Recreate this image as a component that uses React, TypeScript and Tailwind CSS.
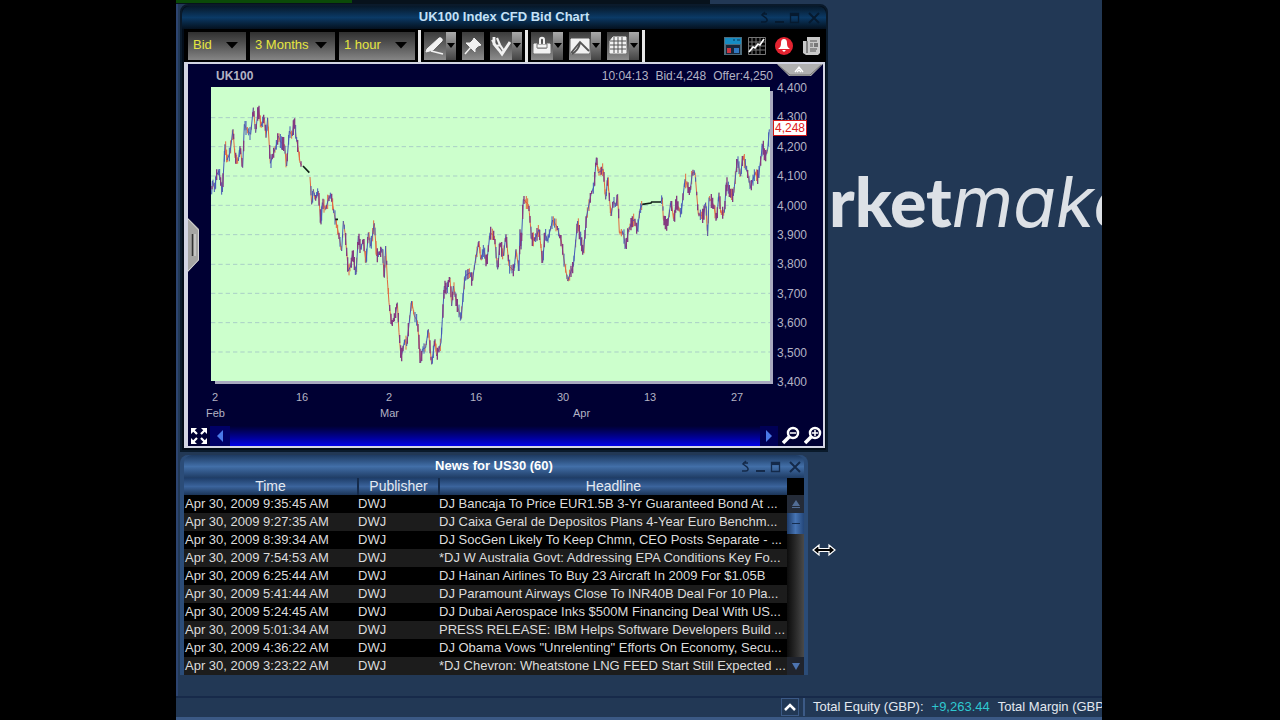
import React from "react";

type Point = [number, number];

const FEBRUARY: Point[] = [
  [2, 322], [4, 282], [12, 307], [15, 267], [24, 252], [34, 315], [42, 172], [48, 219], [57, 197], [66, 127], [72, 212], [82, 222], [87, 177], [95, 242],
  [100, 112], [107, 127], [119, 142], [127, 62], [134, 137], [142, 62], [150, 117], [160, 92], [165, 152], [170, 92], [178, 229], [186, 202], [194, 182],
  [202, 147], [210, 167], [220, 172], [227, 237], [235, 132], [244, 147], [249, 97], [255, 147], [262, 187], [267, 227], [272, 235],
];
const LATE_FEBRUARY: Point[] = [
  [297, 270], [302, 352], [307, 307], [312, 337], [322, 312], [330, 412], [334, 347], [344, 367], [352, 337], [360, 322], [370, 382], [382, 437], [392, 492],
  [397, 402], [402, 437], [412, 552], [419, 537], [425, 497], [435, 562], [442, 447], [449, 487], [457, 457], [465, 527], [472, 437], [479, 477], [490, 409],
  [497, 507], [507, 497], [514, 487], [520, 572], [524, 477], [529, 577], [534, 647], [542, 712], [552, 687], [559, 647], [564, 737], [570, 812],
];
const MARCH: Point[] = [
  [570, 812], [582, 757], [587, 777], [594, 712], [602, 642], [610, 687], [619, 702], [629, 827], [634, 787], [644, 782], [652, 727], [662, 832], [672, 757],
  [677, 807], [690, 767], [694, 697], [700, 597], [707, 607], [717, 572], [722, 657], [727, 597], [737, 647], [750, 697], [762, 567], [777, 557], [784, 582],
  [792, 527], [804, 462], [809, 517], [819, 487], [827, 532], [837, 437], [850, 447], [860, 547], [867, 467], [877, 507], [885, 442], [894, 537], [909, 552],
  [915, 487], [924, 552], [927, 427], [930, 487], [937, 337], [952, 352], [955, 377], [962, 457], [972, 457], [984, 427], [995, 527], [1002, 437], [1009, 462],
  [1017, 432], [1025, 399], [1037, 417], [1052, 467], [1057, 507], [1070, 582], [1082, 547], [1087, 537], [1100, 402],
];
const APRIL: Point[] = [
  [1100, 402], [1107, 447], [1117, 497], [1127, 387], [1140, 322], [1149, 297], [1156, 212], [1162, 257], [1177, 247], [1184, 337], [1190, 272], [1200, 387],
  [1207, 342], [1215, 357], [1220, 322], [1225, 437], [1237, 437], [1244, 482], [1252, 432], [1262, 407], [1270, 397], [1279, 432], [1287, 367], [1294, 352],
];
const LATE_APRIL: Point[] = [
  [1350, 344], [1354, 332], [1357, 397], [1369, 417], [1380, 342], [1389, 402], [1395, 342], [1410, 382], [1422, 277], [1437, 317], [1444, 257], [1452, 257],
  [1462, 382], [1477, 387], [1484, 347], [1490, 447], [1494, 332], [1507, 352], [1517, 397], [1524, 317], [1529, 377], [1540, 377], [1546, 287], [1557, 317],
  [1567, 327], [1579, 217], [1589, 267], [1595, 207], [1605, 237], [1619, 302], [1632, 257], [1642, 272], [1655, 172], [1662, 212], [1670, 187], [1675, 127],
];

function buildSeries(runs: Point[][]) {
  let up = "";
  let down = "";
  let ticks = "";
  let seed = 7;
  const random = () => {
    seed = (seed * 16807) % 2147483647;
    return seed / 2147483647;
  };
  for (const run of runs) {
    for (let i = 1; i < run.length; i++) {
      const [x0, y0] = run[i - 1];
      const [x1, y1] = run[i];
      const line = `M${x0} ${y0}L${x1} ${y1}`;
      if (y1 < y0) up += line;
      else down += line;
      const steps = Math.max(1, Math.round((x1 - x0) / 4));
      for (let s = 0; s < steps; s++) {
        const t = (s + 0.5) / steps;
        const x = Math.round(x0 + (x1 - x0) * t);
        const y = y0 + (y1 - y0) * t;
        const size = 5 + random() * 17;
        const bar = `M${x} ${Math.round(y - size)}V${Math.round(y + size)}`;
        if (random() > 0.6) ticks += bar;
        else if (random() > 0.5) up += bar;
        else down += bar;
      }
    }
  }
  return { up, down, ticks };
}

const SERIES = buildSeries([FEBRUARY, LATE_FEBRUARY, MARCH, APRIL, LATE_APRIL]);
const GRID = [92, 179, 267, 355, 443, 532, 619, 707, 795];
const PRICES = ["4,400", "4,300", "4,200", "4,100", "4,000", "3,900", "3,800", "3,700", "3,600", "3,500", "3,400"];
const DAYS = ["2", "16", "2", "16", "30", "13", "27"];

const NEWS = [
  ["9:35:45", "DJ Bancaja To Price EUR1.5B 3-Yr Guaranteed Bond At ..."],
  ["9:27:35", "DJ Caixa Geral de Depositos Plans 4-Year Euro Benchm..."],
  ["8:39:34", "DJ SocGen Likely To Keep Chmn, CEO Posts Separate - ..."],
  ["7:54:53", "*DJ W Australia Govt: Addressing EPA Conditions Key Fo..."],
  ["6:25:44", "DJ Hainan Airlines To Buy 23 Aircraft In 2009 For $1.05B"],
  ["5:41:44", "DJ Paramount Airways Close To INR40B Deal For 10 Pla..."],
  ["5:24:45", "DJ Dubai Aerospace Inks $500M Financing Deal With US..."],
  ["5:01:34", "PRESS RELEASE: IBM Helps Software Developers Build ..."],
  ["4:36:22", "DJ Obama Vows \"Unrelenting\" Efforts On Economy, Secu..."],
  ["3:23:22", "*DJ Chevron: Wheatstone LNG FEED Start Still Expected ..."],
];

function WindowControls({ className }: { className: string }) {
  return (
    <div className={`absolute top-0 flex h-full items-center ${className}`}>
      <button aria-label="Restore position">
        <svg width="15" height="14" viewBox="0 0 15 14" fill="none" stroke="currentColor" strokeWidth="1.5"><path d="M5 3h5M8 1L5 4l4 3c2 2 1 4-1 4H4" /></svg>
      </button>
      <button aria-label="Minimise">
        <svg width="15" height="14" viewBox="0 0 15 14" stroke="currentColor" strokeWidth="2"><path d="M3 11h9" /></svg>
      </button>
      <button aria-label="Maximise">
        <svg width="15" height="14" viewBox="0 0 15 14" fill="none" stroke="currentColor" strokeWidth="1.3"><path d="M3.500 2.500h8v9h-8z" /><path d="M3 3.500h9" strokeWidth="3" /></svg>
      </button>
      <button aria-label="Close" className="ml-1">
        <svg width="16" height="14" viewBox="0 0 16 14" stroke="currentColor" strokeWidth="2"><path d="M3 2l10 10M13 2L3 12" /></svg>
      </button>
    </div>
  );
}

function Picker({ label, value, className }: { label: string; value: string; className: string }) {
  return (
    <div className={`relative h-7 bg-linear-to-b from-[#303030] to-[#858585] ${className}`}>
      <select aria-label={label} className="h-full w-full appearance-none bg-transparent pb-1 pl-[5px] text-[13px] text-[#e6e640] outline-none">
        <option>{value}</option>
      </select>
      <svg className="pointer-events-none absolute top-2.5 right-2" width="12" height="7" viewBox="0 0 12 7"><path d="M0 0h12L6 6.500z" fill="#000" /></svg>
    </div>
  );
}

function Tool({ label, menu = true, children }: { label: string; menu?: boolean; children: React.ReactNode }) {
  return (
    <button aria-label={label} className="flex h-7 items-stretch">
      <span className="flex w-[22px] items-center justify-center bg-linear-to-b from-[#3c3c3c] to-[#8c8c8c]">
        <svg width="20" height="22" viewBox="0 0 20 22" fill="none" stroke="#f2f2f2">{children}</svg>
      </span>
      {menu && (
        <span className="flex w-2.5 items-center justify-center bg-linear-to-b from-[#aaa] via-[#777] to-[#444]">
          <svg width="8" height="5" viewBox="0 0 8 5"><path d="M0 0h8L4 5z" fill="#000" /></svg>
        </span>
      )}
    </button>
  );
}

function Divider() {
  return <span className="h-[32px] w-[3px] bg-[#e8e8e8]" />;
}

function ChartWindow() {
  return (
    <section className="flex w-[648px] shrink-0 flex-col rounded-t-lg border-2 border-[#0a1a2b] bg-[#030d19] pb-[2px]">
      <header className="relative flex h-[23px] items-center justify-center rounded-t-lg bg-linear-to-b from-[#061829] via-[#0b3a66] to-[#04111f] pb-[2px]">
        <h2 className="text-[13px] font-bold text-[#c5e2f7]">UK100 Index CFD Bid Chart</h2>
        <WindowControls className="right-1 text-[#061a2f]" />
      </header>
      <div className="ml-[2px] flex h-[33px] items-center bg-black pr-1 pl-1">
        <div className="flex items-center gap-1">
          <Picker label="Price" value="Bid" className="w-[58px]" />
          <Picker label="Period" value="3 Months" className="w-[85px]" />
          <Picker label="Interval" value="1 hour" className="w-[76px]" />
        </div>
        <div className="ml-[3px] flex items-center gap-[3px]">
          <Divider />
          <div className="flex items-center gap-1.5">
            <Tool label="Draw">
              <path d="M2 14L14 3c2-1 4 1 3 3L8 15l-7 2z" fill="#f2f2f2" /><path d="M6 16l12 3" strokeWidth="1.500" />
            </Tool>
            <Tool label="Pin" menu={false}>
              <path d="M11 3l7 7-3 1-3 3v3l-9-9h4l3-3z" fill="#f2f2f2" /><path d="M8 12l-6 7" strokeWidth="1.500" />
            </Tool>
            <Tool label="Settings">
              <path d="M3 2v7l5 6 3 4 8-12" strokeWidth="2.800" /><path d="M1 5l4 6 5-1M6 3l3 7 4 6" strokeWidth="2.200" />
            </Tool>
          </div>
          <Divider />
          <div className="flex items-center gap-1.5">
            <Tool label="Studies">
              <path d="M2 9h3v5h10V9h3v9H2z" fill="#f2f2f2" /><path d="M5 9h10v4H5z" fill="#f2f2f2" stroke="#777" /><path d="M8 9V5c0-3 4-3 4 0v4" strokeWidth="2" />
            </Tool>
            <Tool label="Chart type">
              <path d="M1 4h18v14H1z" fill="#f2f2f2" /><path d="M1 18l9-11 9 9M2 19c5-3 7-6 8-11" stroke="#555" strokeWidth="1.800" />
            </Tool>
            <Tool label="Table">
              <path d="M5 2h13v16H2V6z" fill="#f2f2f2" /><path d="M2 6h16M2 10h16M2 14h16M6 2v16M10 2v16M14 2v16" stroke="#555" />
            </Tool>
          </div>
          <Divider />
        </div>
        <div className="ml-auto flex items-center gap-1.5">
          <button aria-label="Deal ticket">
            <svg width="18" height="18" viewBox="0 0 18 18"><path d="M0 0h18v18H0z" fill="#4f6b7b" /><path d="M1 1h16v6H1z" fill="#168bc2" /><path d="M2 8h14v9H2z" fill="#16263a" /><path d="M3 11h4v5H3z" fill="#c93640" /><path d="M10 11h5v5h-5z" fill="#3177c0" /><path d="M9 3h2M13 3h3" stroke="#11334f" /></svg>
          </button>
          <button aria-label="Chart">
            <svg width="18" height="18" viewBox="0 0 18 18" fill="none"><path d="M.5.5h17v17H.5zM4 1v16M8 1v16M12 1v16M1 5h16M1 9h16M1 13h16" stroke="#777" /><path d="M1 15l4-5 2 1 3-4 2 1 4-6" stroke="#fff" strokeWidth="1.700" /></svg>
          </button>
          <button aria-label="Alerts" className="ml-[2px]">
            <svg width="20" height="20" viewBox="0 0 20 20"><circle cx="10" cy="10" r="9" fill="#e32330" /><path d="M10 3c2 0 3 1.500 3 4 0 3 .5 4 3 6H4c2.500-2 3-3 3-6 0-2.500 1-4 3-4zM8 14h4l-2 2z" fill="#fff" /></svg>
          </button>
          <button aria-label="News" className="ml-[2px]">
            <svg width="20" height="20" viewBox="0 0 20 20"><path d="M5 1h13v16l-2 2H4l-3-2V5h4z" fill="#c9c9c9" /><path d="M5 5v12M8 5h7M8 8h3M8 10h3M8 13h7M8 15h6" stroke="#555" strokeWidth="1.200" /><path d="M12 7h4v4h-4z" fill="#777" /></svg>
          </button>
        </div>
      </div>
      <div className="relative mr-px ml-[2px] flex flex-col border-2 border-l-4 border-[#d3d5e3] bg-[#000033] text-xs text-[#b3b3c4]">
        <div className="flex h-[23px] items-center pr-[50px] pl-7">
          <span className="font-bold">UK100</span>
          <span className="ml-auto flex gap-[7px] whitespace-pre"><span>10:04:13</span><span>Bid:4,248</span><span>Offer:4,250</span></span>
        </div>
        <svg className="absolute top-0 right-0" width="46" height="13" viewBox="0 0 46 13"><path d="M0 0h46L34 12H12z" fill="#b0b0b0" /><path d="M1 1l12 10h20L44 1" fill="none" stroke="#707070" /><path d="M18 8l4-5 4 5M20 8l2-2 2 2" fill="none" stroke="#fff" strokeWidth="1.300" /></svg>
        <svg className="absolute top-[154px] left-0" width="12" height="54" viewBox="0 0 12 54"><path d="M0 0l11 11v31L0 54z" fill="#a6a6a4" /><path d="M0 1l10.500 11v30L0 53" fill="none" stroke="#d6d6d6" /><path d="M4.500 16v22" stroke="#333" strokeWidth="1.500" /><path d="M7 16v22" stroke="#e4e4e4" /></svg>
        <div className="flex">
          <div className="ml-[23px] min-w-0 flex-1">
            <div className="relative mr-1">
              <span className="absolute top-1 -right-[3px] -bottom-[3px] left-1 bg-[#a9aac0]" />
              <svg className="relative block h-[294px] w-full bg-[#ccffcc]" viewBox="0 0 1677 882" preserveAspectRatio="none" fill="none">
                {GRID.map((y) => <path key={y} d={`M0 ${y}H1677`} stroke="#a9cfc6" strokeWidth="3" strokeDasharray="13 9" />)}
                <g strokeWidth="3">
                  <path d={SERIES.down} stroke="#e2683f" />
                  <path d={SERIES.up} stroke="#4458b8" />
                  <path d={SERIES.ticks} stroke="#843a80" strokeWidth="4" />
                </g>
                <path d="M276 237L295 257M373 397H381M1294 352L1320 348L1322 345H1350" stroke="#102018" strokeWidth="5" />
              </svg>
            </div>
          </div>
          <div className="relative -mt-[7px] -mb-[9px] flex w-[49px] flex-col justify-between pl-[3px]">
            {PRICES.map((p) => <span key={p} className="leading-4">{p}</span>)}
            <span className="absolute top-10 -left-px w-[34px] border border-[#d01818] bg-white text-center leading-[14px] text-[#e02020]">4,248</span>
          </div>
        </div>
        <div className="mt-2 mr-[66px] ml-[23px] grid grid-cols-[repeat(7,87px)] text-[11px] leading-4">
          {DAYS.map((d, i) => <span key={i} className="flex w-2 justify-center">{d}</span>)}
        </div>
        <div className="flex h-[17px] pl-[18px] text-[11px] leading-[17px]">
          <span className="w-[174px]">Feb</span><span className="w-[193px]">Mar</span><span>Apr</span>
        </div>
        <div className="mt-1 flex h-5 items-center pr-px pl-[2px]">
          <button aria-label="Full screen" className="mr-0.5">
            <svg width="18" height="18" viewBox="0 0 18 18" fill="#fff" stroke="#fff" strokeWidth="2.200"><path d="M2 2l5 5M16 2l-5 5M2 16l5-5M16 16l-5-5" /><path d="M1 1h6L1 7zM11 1h6v6zM1 11v6h6zM17 11v6h-6z" stroke="none" /></svg>
          </button>
          <button aria-label="Scroll left" className="flex h-full w-5 items-center justify-center bg-[#000066]"><svg width="8" height="12" viewBox="0 0 8 12"><path d="M7 0v12L1 6z" fill="#4a78e8" /></svg></button>
          <div className="h-full flex-1 bg-linear-to-b from-[#000033] to-[#0000e8]" />
          <button aria-label="Scroll right" className="flex h-full w-[18px] items-center justify-center bg-[#000055]"><svg width="8" height="12" viewBox="0 0 8 12"><path d="M1 0v12l6-6z" fill="#4a78e8" /></svg></button>
          {["Zoom out", "Zoom in"].map((name, i) => (
            <button key={name} aria-label={name} className="ml-1">
              <svg width="18" height="20" viewBox="0 0 18 20" fill="none" stroke="#fff"><circle cx="11" cy="7" r="5" strokeWidth="2.500" /><path d="M7 11l-6 6" strokeWidth="3.500" /><path d={i ? "M8 7h6M11 4v6" : "M8 7h6"} strokeWidth="1.500" /></svg>
            </button>
          ))}
        </div>
      </div>
    </section>
  );
}

function NewsWindow() {
  return (
    <section className="relative mt-[3px] flex w-[628px] flex-col rounded-t-lg border-x-4 border-[#2b4c78] bg-[#2b4c78]">
      <header className="relative flex h-[23px] items-center justify-center rounded-t-lg bg-linear-to-b from-[#1d3a61] via-[#426fa8] to-[#1f3c64] pb-[2px]">
        <h2 className="text-[13px] font-bold text-white">News for US30 (60)</h2>
        <WindowControls className="right-px text-[#142a4a]" />
      </header>
      <div className="flex bg-black">
        <table className="min-w-0 flex-1 table-fixed border-collapse text-left text-[13px] leading-[18px] text-[#dcdcdc]">
          <colgroup><col className="w-[174px]" /><col className="w-[81px]" /><col /></colgroup>
          <thead>
            <tr className="h-[17px] bg-linear-to-b from-[#1e3d69] via-[#3b649c] to-[#1c3558] text-center text-[14px] leading-[17px] text-[#e4eaf2]">
              <th className="border-r-2 border-[#152b4b] p-0 font-normal">Time</th>
              <th className="border-r-2 border-[#152b4b] p-0 font-normal">Publisher</th>
              <th className="p-0 font-normal">Headline</th>
            </tr>
          </thead>
          <tbody>
            {NEWS.map(([time, headline]) => (
              <tr key={time} className="h-[18px] even:bg-[#1c1c1c]">
                <td className="p-0 pl-px">Apr 30, 2009 {time} AM</td>
                <td className="p-0">DWJ</td>
                <td className="overflow-hidden p-0 whitespace-nowrap">{headline}</td>
              </tr>
            ))}
          </tbody>
        </table>
        <div className="flex w-[17px] flex-col pt-[17px]">
          <button aria-label="Scroll up" className="flex h-[18px] items-center justify-center bg-[#242b38]"><svg width="8" height="8" viewBox="0 0 8 8"><path d="M4 0l4 6H0zM0 7h8v1H0z" fill="#526d95" /></svg></button>
          <div className="flex h-[21px] items-center justify-center bg-linear-to-r from-[#1d3a66] via-[#4674b4] to-[#24477a]"><span className="h-px w-2 bg-[#162e50]" /></div>
          <div className="flex-1 bg-linear-to-r from-[#0c0c0c] to-[#4a4a4a]" />
          <button aria-label="Scroll down" className="flex h-[18px] items-center justify-center bg-[#20242d]"><svg width="8" height="8" viewBox="0 0 8 8"><path d="M0 1h8L4 8z" fill="#4d74b0" /></svg></button>
        </div>
      </div>
    </section>
  );
}

export default function App() {
  return (
    <div className="flex min-h-screen bg-black pr-[178px] pl-44 font-['Liberation_Sans',Arial,sans-serif]">
      <div className="relative flex min-w-0 flex-1 flex-col overflow-hidden bg-[#223855]">
        <div className="flex h-1 w-[534px] bg-[#07121c]"><span className="h-[3px] w-44 bg-[#0b4a08]" /></div>
        <main className="flex-1 border-l-2 border-[#2c4470] pl-[2px]">
          <div className="flex">
            <ChartWindow />
            <div className="flex items-baseline pt-[157px] pl-px leading-[80px] whitespace-nowrap text-[#dde1e6]">
              <span className="font-['Lato',sans-serif] text-[68px] font-black">rket</span>
              <span className="font-['Inter',sans-serif] text-[70px] italic">maker</span>
            </div>
          </div>
          <NewsWindow />
        </main>
        <svg className="absolute top-[542px] left-[636px]" width="24" height="16" viewBox="0 0 24 16"><path d="M1 8l6-5v3.500h10V3l6 5-6 5V9.500H7V13z" fill="#000" stroke="#fff" strokeWidth="1.200" /></svg>
        <footer className="flex h-6 items-center border-t-2 border-b-[3px] border-t-[#172a4a] border-b-[#3b5985] pb-px text-[13px] whitespace-nowrap text-[#e2e8f0]">
          <div className="flex w-[629px] shrink-0 justify-end border-r-2 border-[#3c5a86] pr-1">
            <button aria-label="Expand" className="flex h-[18px] w-[18px] items-center justify-center border border-[#3b5985]">
              <svg width="12" height="8" viewBox="0 0 12 8" fill="none" stroke="#fff" strokeWidth="2.500"><path d="M1 7l5-5 5 5" /></svg>
            </button>
          </div>
          <span className="ml-2">Total Equity (GBP):</span>
          <span className="ml-2 text-[#2fc8d0]">+9,263.44</span>
          <span className="ml-2">Total Margin (GBP):</span>
        </footer>
      </div>
    </div>
  );
}
